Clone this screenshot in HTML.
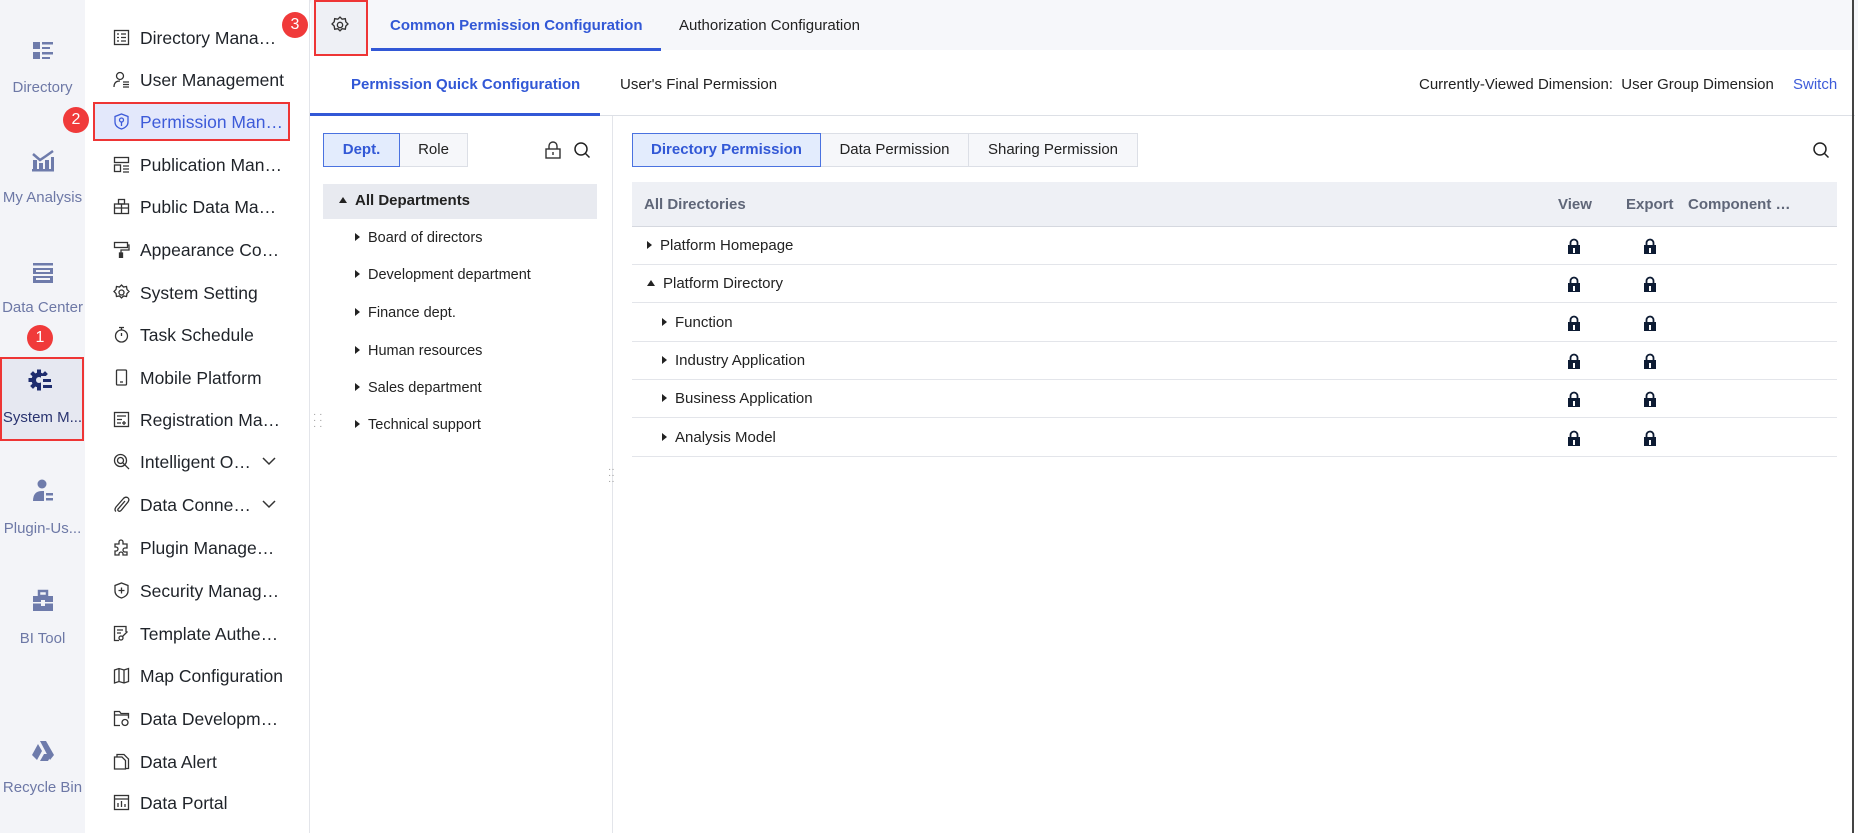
<!DOCTYPE html>
<html><head><meta charset="utf-8"><style>
*{box-sizing:border-box;margin:0;padding:0}
body{width:1858px;height:833px;overflow:hidden;background:#fff;font-family:"Liberation Sans",sans-serif;color:#222;position:relative}
.abs{position:absolute}
.rail{left:0;top:0;width:85px;height:833px;background:#f3f4f8}
.rl{position:absolute;left:0;width:85px;text-align:center;font-size:15px;color:#6d78a6;white-space:nowrap;overflow:hidden}
.ri{position:absolute;left:30px;width:26px;height:26px}
.menu{left:85px;top:0;width:225px;height:833px;background:#fff;border-right:1px solid #e3e5ea}
.mi{position:absolute;left:140px;font-size:17.5px;color:#1f2329;white-space:nowrap;line-height:20px}
.mic{position:absolute;left:113px;width:17px;height:17px}
.badge{position:absolute;width:26px;height:26px;border-radius:50%;background:#f03a3a;color:#fff;font-size:16px;text-align:center;line-height:26px}
.redbox{position:absolute;border:2.5px solid #ee3535}
.t15{font-size:15px;white-space:nowrap}
.tri{display:inline-block;width:0;height:0;border-top:4.5px solid transparent;border-bottom:4.5px solid transparent;border-left:5px solid #222;margin-right:8px;vertical-align:1px}
.trid{display:inline-block;width:0;height:0;border-left:4px solid transparent;border-right:4px solid transparent;border-bottom:6px solid #222;margin-right:8px;vertical-align:2px}
.row{position:absolute;left:632px;width:1205px;height:38px;border-bottom:1px solid #e3e5ea;font-size:15px;line-height:38px}
.lock{position:absolute;top:11px;width:14px;height:16px}
</style></head><body>
<div class="abs" style="left:0;top:0;width:1858px;height:4px;background:linear-gradient(#e8e9ee,#fff)"></div>
<div class="abs rail"></div>
<svg class="ri" style="top:38px" viewBox="0 0 26 26" fill="#6e7bab"><rect x="3" y="4" width="7" height="7"/><rect x="12" y="4" width="11" height="2.5"/><rect x="12" y="9" width="8" height="2"/><rect x="3" y="14" width="7" height="7"/><rect x="12" y="14" width="11" height="2.5"/><rect x="12" y="19" width="8" height="2"/></svg>
<div class="rl" style="top:79px">Directory</div>
<svg class="ri" style="top:148px" viewBox="0 0 26 26" fill="#6e7bab"><path d="M3 6 L10 12 L16 8 L23 3" stroke="#6e7bab" stroke-width="2.5" fill="none"/><rect x="3" y="12" width="4" height="9"/><rect x="9" y="15" width="4" height="6"/><rect x="15" y="12" width="4" height="9"/><rect x="21" y="9" width="3" height="12"/><rect x="2" y="21" width="22" height="2.5"/></svg>
<div class="rl" style="top:189px">My Analysis</div>
<svg class="ri" style="top:260px" viewBox="0 0 26 26" fill="#6e7bab"><rect x="3" y="3" width="20" height="2.5"/><rect x="3" y="8" width="20" height="6" /><rect x="6" y="10" width="14" height="2" fill="#f3f4f8"/><rect x="3" y="16" width="20" height="7"/><rect x="6" y="18" width="14" height="2" fill="#f3f4f8"/></svg>
<div class="rl" style="top:299px">Data Center</div>
<div class="abs" style="left:0;top:357px;width:84px;height:84px;background:#e6e8f1"></div>
<svg class="ri" style="top:367px;left:27px" viewBox="0 0 26 26"><g fill="#1f2d6e"><circle cx="12" cy="13" r="7.5"/><rect x="10" y="2.5" width="4" height="4"/><rect x="10" y="19.5" width="4" height="4"/><rect x="1.5" y="11" width="4" height="4"/><rect x="10" y="2.5" width="4" height="4" transform="rotate(45 12 13)"/><rect x="10" y="2.5" width="4" height="4" transform="rotate(-45 12 13)"/><rect x="10" y="19.5" width="4" height="4" transform="rotate(45 12 13)"/><rect x="10" y="19.5" width="4" height="4" transform="rotate(-45 12 13)"/></g><circle cx="12" cy="13" r="3" fill="#e6e8f1"/><rect x="14" y="9" width="12" height="14" fill="#e6e8f1"/><rect x="16" y="12" width="8" height="3" fill="#1f2d6e"/><rect x="16" y="18" width="9" height="3" fill="#1f2d6e"/></svg>
<div class="rl" style="top:409px;color:#2a3470">System M...</div>
<div class="redbox" style="left:0;top:357px;width:84px;height:84px"></div>
<div class="badge" style="left:27px;top:325px">1</div>
<svg class="ri" style="top:478px" viewBox="0 0 26 26" fill="#6e7bab"><circle cx="12" cy="6" r="4.5"/><path d="M3 23 Q3 13 12 13 L14 13 L14 23Z"/><rect x="16" y="15" width="7" height="2.5"/><rect x="16" y="20" width="7" height="2.5"/></svg>
<div class="rl" style="top:520px">Plugin-Us...</div>
<svg class="ri" style="top:588px" viewBox="0 0 26 26" fill="#6e7bab"><rect x="9" y="3" width="8" height="5" fill="none" stroke="#6e7bab" stroke-width="2.5"/><rect x="3" y="8" width="20" height="15"/><rect x="3" y="14" width="20" height="1.5" fill="#f3f4f8"/><rect x="11" y="12" width="4" height="6" fill="#f3f4f8"/></svg>
<div class="rl" style="top:630px">BI Tool</div>
<svg class="ri" style="top:738px" viewBox="0 0 26 26" fill="#6e7bab"><path d="M10 3 L16 3 L24 17 L20 22 Z"/><path d="M8 6 L12 13 L7 22 L2 17 Z"/><path d="M10 23 L14 16 L22 16 L18 23Z"/></svg>
<div class="rl" style="top:779px">Recycle Bin</div>

<div class="abs menu"></div>
<div class="abs" style="left:93px;top:103px;width:197px;height:38px;background:#e3e8fb"></div>
<div class="redbox" style="left:93px;top:102px;width:197px;height:39px"></div>
<div class="badge" style="left:63px;top:107px">2</div>
<div class="badge" style="left:282px;top:12px">3</div>

<svg class="mic" style="top:29px" viewBox="0 0 17 17" fill="none" stroke="#333" stroke-width="1.3"><rect x="1.5" y="1.5" width="14" height="14"/><path d="M4 5h2M8 5h5M4 8.5h2M8 8.5h5M4 12h2M8 12h5"/></svg>
<div class="mi" style="top:28px">Directory Mana…</div>
<svg class="mic" style="top:71px" viewBox="0 0 17 17" fill="none" stroke="#333" stroke-width="1.3"><circle cx="7" cy="5" r="3.5"/><path d="M1 16 Q1 10 7 10M10 11h6M10 13.5h6M10 16h6"/></svg>
<div class="mi" style="top:70px">User Management</div>
<svg class="mic" style="top:113px" viewBox="0 0 17 17" fill="none" stroke="#3d5bd9" stroke-width="1.3"><path d="M8.5 1 L15 3.5 V9 Q15 14 8.5 16 Q2 14 2 9 V3.5Z"/><circle cx="8.5" cy="7" r="2"/><path d="M8.5 9v4"/></svg>
<div class="mi" style="top:112px;color:#3d5bd9">Permission Man…</div>
<svg class="mic" style="top:156px" viewBox="0 0 17 17" fill="none" stroke="#333" stroke-width="1.3"><rect x="1.5" y="1.5" width="14" height="5"/><rect x="1.5" y="9" width="6" height="6.5"/><path d="M10 10h6M10 13h6M10 16h6"/></svg>
<div class="mi" style="top:155px">Publication Man…</div>
<svg class="mic" style="top:198px" viewBox="0 0 17 17" fill="none" stroke="#333" stroke-width="1.3"><rect x="1.5" y="6" width="14" height="9.5"/><rect x="5.5" y="1.5" width="6" height="4.5"/><path d="M1.5 10h14M8.5 6v9"/></svg>
<div class="mi" style="top:197px">Public Data Ma…</div>
<svg class="mic" style="top:241px" viewBox="0 0 17 17" fill="none" stroke="#333" stroke-width="1.3"><rect x="1.5" y="1.5" width="13" height="5"/><path d="M14.5 4h1.5v5h-8v3"/><rect x="6.5" y="12" width="3" height="4.5" fill="#333"/></svg>
<div class="mi" style="top:240px">Appearance Co…</div>
<svg class="mic" style="top:284px" viewBox="0 0 17 17" fill="none" stroke="#333" stroke-width="1.3"><path d="M8.5 1l2 2 3-.5.5 3 2 2-2 2-.5 3-3-.5-2 2-2-2-3 .5-.5-3-2-2 2-2 .5-3 3 .5z"/><circle cx="8.5" cy="8.5" r="2.5"/></svg>
<div class="mi" style="top:283px">System Setting</div>
<svg class="mic" style="top:326px" viewBox="0 0 17 17" fill="none" stroke="#333" stroke-width="1.3"><circle cx="8.5" cy="10" r="6"/><path d="M6 1.5h5M8.5 2v2M8.5 10V7"/></svg>
<div class="mi" style="top:325px">Task Schedule</div>
<svg class="mic" style="top:369px" viewBox="0 0 17 17" fill="none" stroke="#333" stroke-width="1.3"><rect x="3.5" y="1" width="10" height="15" rx="1"/><path d="M7 13h3"/></svg>
<div class="mi" style="top:368px">Mobile Platform</div>
<svg class="mic" style="top:411px" viewBox="0 0 17 17" fill="none" stroke="#333" stroke-width="1.3"><rect x="1.5" y="1.5" width="14" height="14"/><path d="M4 5h9M4 8.5h5M4 12h4M11 10v4M9 12h4"/></svg>
<div class="mi" style="top:410px">Registration Ma…</div>
<svg class="mic" style="top:453px" viewBox="0 0 17 17" fill="none" stroke="#333" stroke-width="1.3"><circle cx="7.5" cy="7.5" r="6"/><circle cx="7.5" cy="7.5" r="3"/><path d="M10 10l6 6"/></svg>
<div class="mi" style="top:452px">Intelligent O…</div>
<svg class="abs" style="left:262px;top:456px" width="14" height="10" viewBox="0 0 14 10"><path d="M1 2l6 6 6-6" fill="none" stroke="#333" stroke-width="1.5"/></svg>
<svg class="mic" style="top:496px" viewBox="0 0 17 17" fill="none" stroke="#333" stroke-width="1.3"><path d="M12 5 L5.5 12.5 Q4 14 5.5 15 Q7 16 8.5 14 L15 6 Q17 3 14.5 1.5 Q12 0.5 10 3 L3 11 Q1 14 3 15.5"/></svg>
<div class="mi" style="top:495px">Data Conne…</div>
<svg class="abs" style="left:262px;top:499px" width="14" height="10" viewBox="0 0 14 10"><path d="M1 2l6 6 6-6" fill="none" stroke="#333" stroke-width="1.5"/></svg>
<svg class="mic" style="top:539px" viewBox="0 0 17 17" fill="none" stroke="#333" stroke-width="1.3"><path d="M2 5h4v-2a2 2 0 0 1 4 0v2h4v4h-2a2 2 0 0 0 0 4h2v3h-4v-1a2 2 0 0 0-4 0v1h-4v-4h1a2 2 0 0 0 0-4h-1z"/></svg>
<div class="mi" style="top:538px">Plugin Manage…</div>
<svg class="mic" style="top:582px" viewBox="0 0 17 17" fill="none" stroke="#333" stroke-width="1.3"><path d="M8.5 1 L15 3.5 V9 Q15 14 8.5 16 Q2 14 2 9 V3.5Z"/><path d="M8.5 5.5v6M5.5 8.5h6"/></svg>
<div class="mi" style="top:581px">Security Manag…</div>
<svg class="mic" style="top:625px" viewBox="0 0 17 17" fill="none" stroke="#333" stroke-width="1.3"><path d="M13 7V1.5H1.5v14H6"/><path d="M4 5h6M4 8h4"/><circle cx="8" cy="13" r="2"/><path d="M9.5 11.5l5-5"/></svg>
<div class="mi" style="top:624px">Template Authe…</div>
<svg class="mic" style="top:667px" viewBox="0 0 17 17" fill="none" stroke="#333" stroke-width="1.3"><path d="M1.5 3l4.5-1.5 5 1.5 4.5-1.5v13l-4.5 1.5-5-1.5-4.5 1.5z M6 1.5v13 M11 3v13"/></svg>
<div class="mi" style="top:666px">Map Configuration</div>
<svg class="mic" style="top:710px" viewBox="0 0 17 17" fill="none" stroke="#333" stroke-width="1.3"><path d="M7 15.5H1.5V1.5h5l1.5 2h7.5v5"/><circle cx="12" cy="12.5" r="3"/><path d="M1.5 5h14"/></svg>
<div class="mi" style="top:709px">Data Developm…</div>
<svg class="mic" style="top:753px" viewBox="0 0 17 17" fill="none" stroke="#333" stroke-width="1.3"><path d="M4 4V1.5h7l4.5 4.5V15.5H13M1.5 4h7.5l3.5 3.5V16H1.5Z"/></svg>
<div class="mi" style="top:752px">Data Alert</div>
<svg class="mic" style="top:794px" viewBox="0 0 17 17" fill="none" stroke="#333" stroke-width="1.3"><rect x="1.5" y="1.5" width="14" height="14"/><path d="M1.5 5h14M5 13v-4M8.5 13v-6M12 13v-3"/></svg>
<div class="mi" style="top:793px">Data Portal</div>

<div class="abs" style="left:311px;top:0;width:1547px;height:50px;background:#f6f7fa"></div>
<div class="abs" style="left:314px;top:0;width:54px;height:56px;background:#eef0f5"></div>
<svg class="abs" style="left:331px;top:16px" width="18" height="18" viewBox="0 0 17 17" fill="none" stroke="#333" stroke-width="1.3"><path d="M8.5 1l2 2 3-.5.5 3 2 2-2 2-.5 3-3-.5-2 2-2-2-3 .5-.5-3-2-2 2-2 .5-3 3 .5z"/><circle cx="8.5" cy="8.5" r="2.5"/></svg>
<div class="redbox" style="left:314px;top:0;width:54px;height:56px"></div>
<div class="abs t15" style="left:390px;top:17px;font-weight:bold;color:#3258d6">Common Permission Configuration</div>
<div class="abs" style="left:371px;top:48px;width:290px;height:2.5px;background:#3258d6"></div>
<div class="abs t15" style="left:679px;top:17px;color:#222">Authorization Configuration</div>

<div class="abs t15" style="left:351px;top:76px;font-weight:bold;color:#3258d6">Permission Quick Configuration</div>
<div class="abs t15" style="left:620px;top:76px">User's Final Permission</div>
<div class="abs t15" style="left:1419px;top:76px">Currently-Viewed Dimension:&nbsp; User Group Dimension</div>
<div class="abs t15" style="left:1793px;top:76px;color:#3d5bd9">Switch</div>
<div class="abs" style="left:310px;top:115px;width:1545px;height:1px;background:#dde0e6"></div>
<div class="abs" style="left:310px;top:113px;width:290px;height:2.5px;background:#3258d6"></div>
<div class="abs" style="left:1852px;top:0;width:2px;height:833px;background:#444"></div>

<div class="abs" style="left:612px;top:116px;width:1px;height:717px;background:#e3e5ea"></div>
<div class="abs" style="left:313px;top:412px;font-size:10px;color:#999;line-height:6px">· ·<br>· ·<br>· ·</div>
<div class="abs" style="left:608px;top:467px;font-size:10px;color:#999;line-height:6px">··<br>··<br>··</div>
<div class="abs" style="left:323px;top:133px;width:77px;height:34px;background:#e3ecfd;border:1.5px solid #4a72e0;text-align:center;line-height:31px;font-size:15px;font-weight:bold;color:#3258d6">Dept.</div>
<div class="abs" style="left:400px;top:133px;width:68px;height:34px;background:#f6f7fa;border:1px solid #dcdfe6;border-left:none;text-align:center;line-height:32px;font-size:15px">Role</div>
<svg class="abs" style="left:544px;top:140px" width="18" height="20" viewBox="0 0 18 20" fill="none" stroke="#333" stroke-width="1.4"><path d="M5 9V6a4 4 0 0 1 8 0v3"/><rect x="2" y="9" width="14" height="9"/><path d="M9 12v3"/></svg>
<svg class="abs" style="left:573px;top:141px" width="18" height="18" viewBox="0 0 18 18" fill="none" stroke="#222" stroke-width="1.5"><circle cx="8" cy="8" r="6"/><path d="M12.5 12.5l4 4"/></svg>
<div class="abs" style="left:323px;top:184px;width:274px;height:35px;background:#e8eaf0"></div>
<div class="abs t15" style="left:339px;top:192px;font-weight:bold"><span class="trid"></span>All Departments</div>
<div class="abs t15" style="left:355px;top:230px;font-size:14.5px"><span class="tri"></span>Board of directors</div>
<div class="abs t15" style="left:355px;top:267px;font-size:14.5px"><span class="tri"></span>Development department</div>
<div class="abs t15" style="left:355px;top:305px;font-size:14.5px"><span class="tri"></span>Finance dept.</div>
<div class="abs t15" style="left:355px;top:343px;font-size:14.5px"><span class="tri"></span>Human resources</div>
<div class="abs t15" style="left:355px;top:380px;font-size:14.5px"><span class="tri"></span>Sales department</div>
<div class="abs t15" style="left:355px;top:417px;font-size:14.5px"><span class="tri"></span>Technical support</div>

<div class="abs" style="left:632px;top:133px;width:189px;height:34px;background:#e3ecfd;border:1.5px solid #4a72e0;text-align:center;line-height:31px;font-size:15px;font-weight:bold;color:#3258d6">Directory Permission</div>
<div class="abs" style="left:821px;top:133px;width:148px;height:34px;background:#f6f7fa;border:1px solid #dcdfe6;border-left:none;text-align:center;line-height:32px;font-size:15px">Data Permission</div>
<div class="abs" style="left:969px;top:133px;width:169px;height:34px;background:#f6f7fa;border:1px solid #dcdfe6;border-left:none;text-align:center;line-height:32px;font-size:15px">Sharing Permission</div>
<svg class="abs" style="left:1812px;top:141px" width="18" height="18" viewBox="0 0 18 18" fill="none" stroke="#222" stroke-width="1.5"><circle cx="8" cy="8" r="6"/><path d="M12.5 12.5l4 4"/></svg>
<div class="abs" style="left:632px;top:182px;width:1205px;height:45px;background:#eef0f5;border-bottom:1.5px solid #d5d8df"></div>
<div class="abs t15" style="left:644px;top:196px;font-weight:bold;color:#5f6678">All Directories</div>
<div class="abs t15" style="left:1558px;top:196px;font-weight:bold;color:#5f6678">View</div>
<div class="abs t15" style="left:1626px;top:196px;font-weight:bold;color:#5f6678">Export</div>
<div class="abs t15" style="left:1688px;top:196px;font-weight:bold;color:#5f6678">Component …</div>

<div class="row" style="top:227px"><span style="margin-left:15px" class="tri"></span>Platform Homepage<svg class="lock" style="left:935px" viewBox="0 0 14 16"><path d="M3.5 8V5a3.5 3.5 0 0 1 7 0v3" fill="none" stroke="#0d1b33" stroke-width="1.8"/><rect x="1" y="7" width="12" height="9" fill="#0d1b33"/><rect x="6" y="10" width="2" height="5" fill="#fff"/></svg><svg class="lock" style="left:1011px" viewBox="0 0 14 16"><path d="M3.5 8V5a3.5 3.5 0 0 1 7 0v3" fill="none" stroke="#0d1b33" stroke-width="1.8"/><rect x="1" y="7" width="12" height="9" fill="#0d1b33"/><rect x="6" y="10" width="2" height="5" fill="#fff"/></svg></div>
<div class="row" style="top:265px"><span style="margin-left:15px" class="trid"></span>Platform Directory<svg class="lock" style="left:935px" viewBox="0 0 14 16"><path d="M3.5 8V5a3.5 3.5 0 0 1 7 0v3" fill="none" stroke="#0d1b33" stroke-width="1.8"/><rect x="1" y="7" width="12" height="9" fill="#0d1b33"/><rect x="6" y="10" width="2" height="5" fill="#fff"/></svg><svg class="lock" style="left:1011px" viewBox="0 0 14 16"><path d="M3.5 8V5a3.5 3.5 0 0 1 7 0v3" fill="none" stroke="#0d1b33" stroke-width="1.8"/><rect x="1" y="7" width="12" height="9" fill="#0d1b33"/><rect x="6" y="10" width="2" height="5" fill="#fff"/></svg></div>
<div class="row" style="top:304px"><span style="margin-left:30px" class="tri"></span>Function<svg class="lock" style="left:935px" viewBox="0 0 14 16"><path d="M3.5 8V5a3.5 3.5 0 0 1 7 0v3" fill="none" stroke="#0d1b33" stroke-width="1.8"/><rect x="1" y="7" width="12" height="9" fill="#0d1b33"/><rect x="6" y="10" width="2" height="5" fill="#fff"/></svg><svg class="lock" style="left:1011px" viewBox="0 0 14 16"><path d="M3.5 8V5a3.5 3.5 0 0 1 7 0v3" fill="none" stroke="#0d1b33" stroke-width="1.8"/><rect x="1" y="7" width="12" height="9" fill="#0d1b33"/><rect x="6" y="10" width="2" height="5" fill="#fff"/></svg></div>
<div class="row" style="top:342px"><span style="margin-left:30px" class="tri"></span>Industry Application<svg class="lock" style="left:935px" viewBox="0 0 14 16"><path d="M3.5 8V5a3.5 3.5 0 0 1 7 0v3" fill="none" stroke="#0d1b33" stroke-width="1.8"/><rect x="1" y="7" width="12" height="9" fill="#0d1b33"/><rect x="6" y="10" width="2" height="5" fill="#fff"/></svg><svg class="lock" style="left:1011px" viewBox="0 0 14 16"><path d="M3.5 8V5a3.5 3.5 0 0 1 7 0v3" fill="none" stroke="#0d1b33" stroke-width="1.8"/><rect x="1" y="7" width="12" height="9" fill="#0d1b33"/><rect x="6" y="10" width="2" height="5" fill="#fff"/></svg></div>
<div class="row" style="top:380px"><span style="margin-left:30px" class="tri"></span>Business Application<svg class="lock" style="left:935px" viewBox="0 0 14 16"><path d="M3.5 8V5a3.5 3.5 0 0 1 7 0v3" fill="none" stroke="#0d1b33" stroke-width="1.8"/><rect x="1" y="7" width="12" height="9" fill="#0d1b33"/><rect x="6" y="10" width="2" height="5" fill="#fff"/></svg><svg class="lock" style="left:1011px" viewBox="0 0 14 16"><path d="M3.5 8V5a3.5 3.5 0 0 1 7 0v3" fill="none" stroke="#0d1b33" stroke-width="1.8"/><rect x="1" y="7" width="12" height="9" fill="#0d1b33"/><rect x="6" y="10" width="2" height="5" fill="#fff"/></svg></div>
<div class="row" style="top:419px"><span style="margin-left:30px" class="tri"></span>Analysis Model<svg class="lock" style="left:935px" viewBox="0 0 14 16"><path d="M3.5 8V5a3.5 3.5 0 0 1 7 0v3" fill="none" stroke="#0d1b33" stroke-width="1.8"/><rect x="1" y="7" width="12" height="9" fill="#0d1b33"/><rect x="6" y="10" width="2" height="5" fill="#fff"/></svg><svg class="lock" style="left:1011px" viewBox="0 0 14 16"><path d="M3.5 8V5a3.5 3.5 0 0 1 7 0v3" fill="none" stroke="#0d1b33" stroke-width="1.8"/><rect x="1" y="7" width="12" height="9" fill="#0d1b33"/><rect x="6" y="10" width="2" height="5" fill="#fff"/></svg></div>
</body></html>
